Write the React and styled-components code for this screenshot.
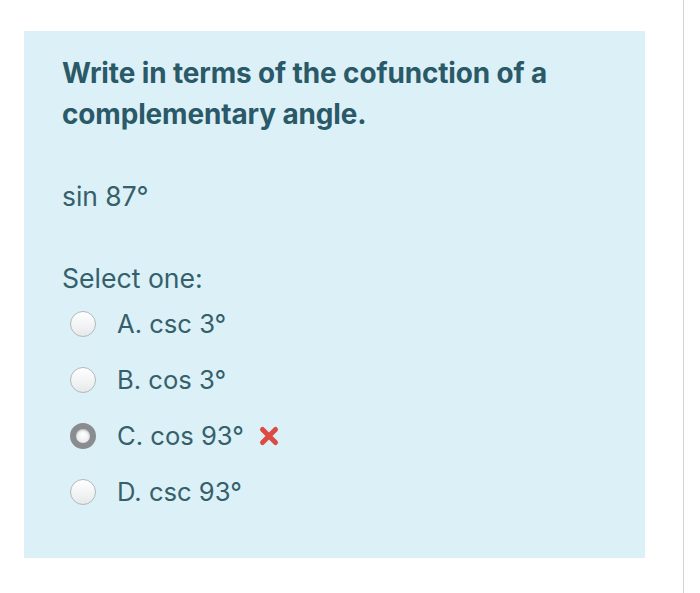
import React from 'react';
import styled, { createGlobalStyle } from 'styled-components';

const GlobalStyle = createGlobalStyle`
  html, body {
    margin: 0;
    padding: 0;
    background: #ffffff;
  }
  body {
    font-family: Inter, "Liberation Sans", Arial, sans-serif;
  }
`;

const Page = styled.div`
  width: 700px;
  height: 593px;
  display: flex;
  background: #ffffff;
`;

const Main = styled.div`
  flex: 0 0 683px;
  padding: 31px 0 0 24px;
  box-sizing: border-box;
`;

const Divider = styled.div`
  width: 1px;
  height: 100%;
  background: #d4d4d4;
`;

const Card = styled.div`
  width: 621px;
  height: 527px;
  box-sizing: border-box;
  background: #dcf0f7;
  padding: 22px 38px 0 38px;
  color: #35606b;
`;

const Title = styled.h2`
  margin: 0;
  font-size: 27.9px;
  line-height: 41px;
  font-weight: 700;
  letter-spacing: -0.1px;
  color: #2a5967;
`;

const Expression = styled.div`
  margin-top: 46px;
  font-size: 26.4px;
  line-height: 30px;
`;

const Prompt = styled.div`
  margin-top: 52px;
  font-size: 26.6px;
  line-height: 30px;
`;

const Options = styled.div`
  display: flex;
  flex-direction: column;
  gap: 26px;
  margin-top: 16px;
  padding-left: 8px;
`;

const Option = styled.label`
  display: flex;
  align-items: center;
  gap: 21px;
  font-size: 25.6px;
  line-height: 30px;
`;

const Radio = styled.span`
  width: 26px;
  height: 26px;
  box-sizing: border-box;
  border-radius: 50%;
  flex: 0 0 auto;
  border: ${(p) => (p.checked ? '6px solid #8a8d8f' : '1.5px solid #b4b8ba')};
  background: ${(p) =>
    p.checked
      ? 'radial-gradient(circle at 50% 40%, #ffffff, #dfe3e6)'
      : 'linear-gradient(#ffffff, #e6e9eb)'};
  box-shadow: ${(p) => (p.checked ? 'inset 0 1px 2px rgba(0,0,0,0.25)' : 'none')};
`;

const Cross = styled.svg`
  width: 22px;
  height: 22px;
  margin-left: -7px;
`;

const options = [
  { label: 'A. csc 3°' },
  { label: 'B. cos 3°' },
  { label: 'C. cos 93°', checked: true, wrong: true },
  { label: 'D. csc 93°' },
];

export default function App() {
  return (
    <>
      <GlobalStyle />
      <Page>
        <Main>
          <Card>
            <Title>
              Write in terms of the cofunction of a
              <br />
              complementary angle.
            </Title>
            <Expression>sin 87°</Expression>
            <Prompt>Select one:</Prompt>
            <Options>
              {options.map((o) => (
                <Option key={o.label}>
                  <Radio checked={o.checked} />
                  <span>{o.label}</span>
                  {o.wrong && (
                    <Cross viewBox="0 0 22 22">
                      <path
                        d="M4.5 4.5 L17.5 17.5 M17.5 4.5 L4.5 17.5"
                        stroke="#dc4a43"
                        strokeWidth="5"
                        strokeLinecap="round"
                      />
                    </Cross>
                  )}
                </Option>
              ))}
            </Options>
          </Card>
        </Main>
        <Divider />
      </Page>
    </>
  );
}
